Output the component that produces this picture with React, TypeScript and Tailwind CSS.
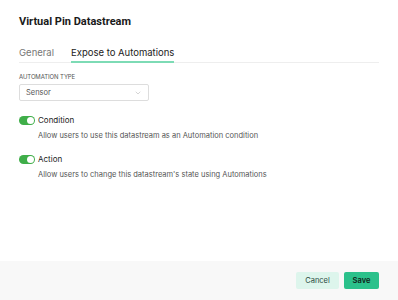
import { ChevronDown } from "lucide-react";

function Toggle() {
  return (
    <span className="flex h-[9px] w-[16px] items-center justify-end rounded-full bg-[#3fae49] px-[1px]">
      <span className="h-[7px] w-[7px] rounded-full bg-white" />
    </span>
  );
}

function Option({ title, text }: { title: string; text: string }) {
  return (
    <div className="flex flex-col gap-[5px]">
      <div className="flex h-[12px] items-center gap-[3px]">
        <Toggle />
        <span className="text-[8px] leading-[12px] text-[#222]">{title}</span>
      </div>
      <p className="pl-[19px] text-[7.5px] leading-[10px] text-[#555]">{text}</p>
    </div>
  );
}

export default function App() {
  return (
    <div className="flex h-[300px] w-[398px] flex-col bg-white font-['Inter',sans-serif]">
      <div className="flex-1 px-[19px] pt-[15px]">
        <h1 className="font-['Roboto',sans-serif] text-[11px] font-bold leading-[14px] text-[#1a1a1a]">
          Virtual Pin Datastream
        </h1>

        <div className="mt-[18px] flex gap-[17px] border-b border-[#eeeeee] text-[9.5px] leading-[12px]">
          <span className="pb-[3px] text-[#777]">General</span>
          <span className="-mb-px border-b-2 border-[#7ddbb5] pb-[2px] text-[#222]">Expose to Automations</span>
        </div>

        <div className="mt-[10px] text-[6px] uppercase leading-[8px] tracking-[-0.1px] text-[#555]">Automation type</div>
        <div className="mt-[3px] flex h-[17px] w-[130px] items-center justify-between rounded-[2px] border border-[#dddddd] px-[6px]">
          <span className="text-[7.5px] text-[#555]">Sensor</span>
          <ChevronDown className="h-[8px] w-[8px] text-[#aaa]" strokeWidth={1.5} />
        </div>

        <div className="mt-[13px] flex flex-col gap-[12px]">
          <Option title="Condition" text="Allow users to use this datastream as an Automation condition" />
          <Option title="Action" text="Allow users to change this datastream's state using Automations" />
        </div>
      </div>

      <div className="flex h-[39px] items-center justify-end gap-[5px] bg-[#f8f8f8] px-[19px]">
        <button className="h-[17px] w-[43px] rounded-[2px] bg-[#ddf5ec] text-[7.5px] text-[#2a4a3e]">Cancel</button>
        <button className="h-[17px] w-[35px] rounded-[2px] bg-[#2bc18b] text-[7.5px] font-semibold text-[#102018]">Save</button>
      </div>
    </div>
  );
}
